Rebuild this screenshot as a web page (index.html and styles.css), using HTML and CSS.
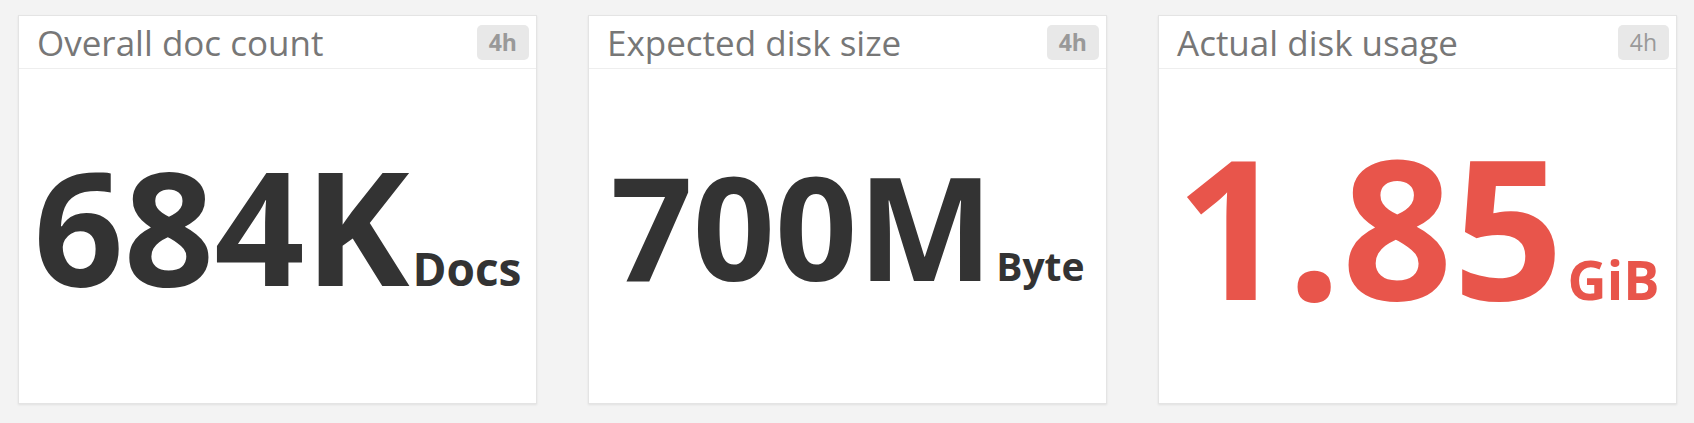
FILE: index.html
```html
<!DOCTYPE html>
<html lang="en">
<head>
    <meta charset="UTF-8">
    <meta name="viewport" content="width=device-width, initial-scale=1.0">
    <title>Index stats</title>
    <link rel="stylesheet" href="styles.css">
</head>
<body>

    <div class="board">
        <div class="widget">
            <div class="widget-head">
                <span class="widget-title">Overall doc count</span>
                <span class="timeframe">4h</span>
            </div>
            <div class="widget-body">
                <span class="reading">
                    <span class="value value-docs">684K</span><span class="unit unit-docs">Docs</span>
                </span>
            </div>
        </div>

        <div class="widget">
            <div class="widget-head">
                <span class="widget-title">Expected disk size</span>
                <span class="timeframe">4h</span>
            </div>
            <div class="widget-body">
                <span class="reading">
                    <span class="value value-size">700M</span><span class="unit unit-size">Byte</span>
                </span>
            </div>
        </div>

        <div class="widget">
            <div class="widget-head">
                <span class="widget-title">Actual disk usage</span>
                <span class="timeframe timeframe-light">4h</span>
            </div>
            <div class="widget-body alert">
                <span class="reading">
                    <span class="value value-usage">1.85</span><span class="unit unit-usage">GiB</span>
                </span>
            </div>
        </div>
    </div>

</body>
</html>
```

FILE: styles.css
```css
body {
    margin: 0;
    background-color: #f3f3f3;
    font-family: 'Open Sans', sans-serif;
    color: #333;
}

.board {
    display: flex;
    gap: 51px;
    padding: 15px 17px 19px 18px;
    height: 423px;
    box-sizing: border-box;
}

.widget {
    flex: 1 1 0;
    min-width: 0;
    display: flex;
    flex-direction: column;
    background-color: #fff;
    border: 1px solid #e4e4e4;
    box-shadow: 0 1px 2px rgba(0, 0, 0, 0.08);
}

.widget-head {
    display: flex;
    justify-content: space-between;
    align-items: center;
    height: 52px;
    padding: 0 7px 0 18px;
    border-bottom: 1px solid #eee;
}

.widget-title {
    font-size: 35px;
    color: #777;
    white-space: nowrap;
}

.timeframe {
    padding: 2px 12px;
    line-height: 31px;
    border-radius: 5px;
    background-color: #e8e8e8;
    color: #999;
    font-size: 23px;
    font-weight: bold;
}

.timeframe-light {
    font-weight: normal;
}

.widget-body {
    flex: 1;
    display: flex;
    justify-content: center;
    align-items: center;
    padding-bottom: 22px;
    font-weight: bold;
}

.reading {
    line-height: 1;
    white-space: nowrap;
}

.unit {
    margin-left: 3px;
}

.value-docs { font-size: 158px; }
.unit-docs { font-size: 46px; }

.value-size { font-size: 144px; }
.unit-size { font-size: 39px; }

.value-usage { font-size: 194px; }
.unit-usage { font-size: 54px; margin-left: 4px; }

.alert {
    color: #e8554b;
}
```
